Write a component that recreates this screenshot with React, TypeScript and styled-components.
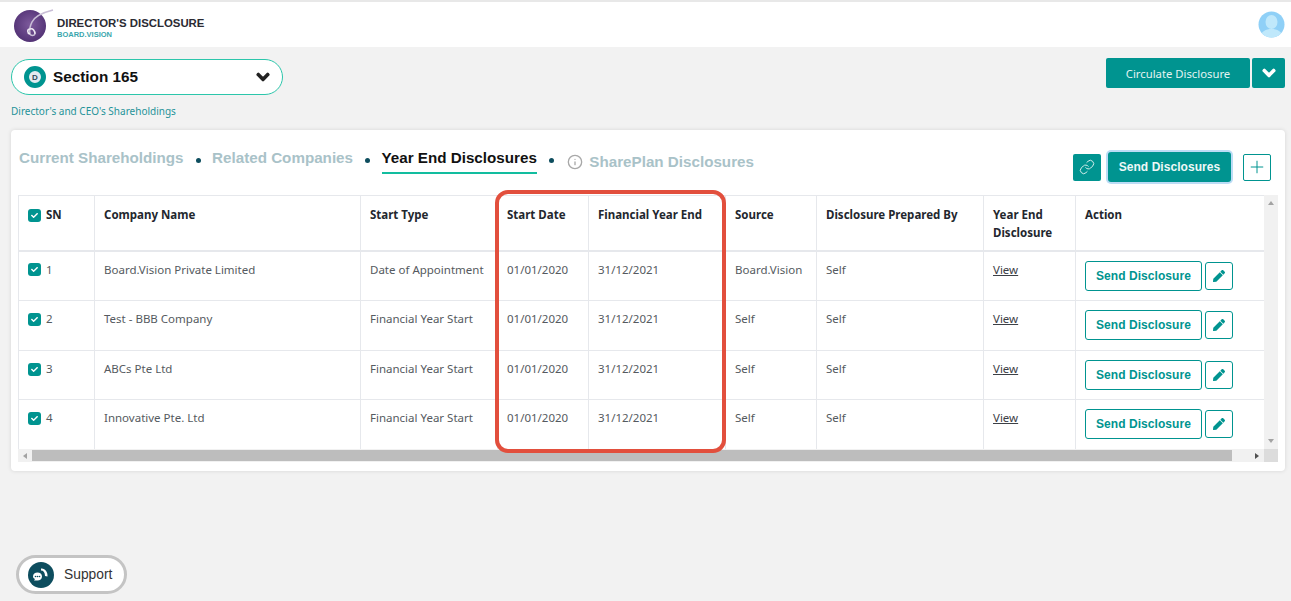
import React from 'react'
import styled, { createGlobalStyle } from 'styled-components'
import { FaChevronDown, FaPen, FaCheck } from 'react-icons/fa'
import { Link, Plus, Info } from 'lucide-react'

const teal = '#009490'
const uiFont = `'Noto Sans', 'Open Sans', sans-serif`
const arial = `'Liberation Sans', Arial, sans-serif`

const GlobalStyle = createGlobalStyle`
  html, body { margin: 0; padding: 0; height: 100%; background: #f2f2f2; overflow: hidden; }
  * { box-sizing: border-box; }
  body { font-family: ${uiFont}; }
`

const Page = styled.div`
  width: 1291px;
  height: 601px;
  display: flex;
  flex-direction: column;
  position: relative;
`

const TopBar = styled.header`
  height: 47px;
  flex: none;
  background: #fff;
  border-top: 2px solid #e8e8e8;
  display: flex;
  align-items: center;
  justify-content: space-between;
  padding: 0 6px 0 14px;
`

const Brand = styled.div`
  display: flex;
  align-items: center;
  gap: 3px;
`

const BrandText = styled.div`
  display: flex;
  flex-direction: column;
  font-family: ${arial};
  padding-top: 5px;
`

const BrandTitle = styled.span`
  font-size: 11.4px;
  line-height: 14px;
  font-weight: 700;
  color: #2b2b33;
`

const BrandSub = styled.span`
  font-size: 7.5px;
  line-height: 9px;
  font-weight: 700;
  color: #3aa6ad;
`

const Content = styled.main`
  flex: 1;
  padding: 12px 6px 0 11px;
  display: flex;
  flex-direction: column;
`

const SectionRow = styled.div`
  display: flex;
  align-items: flex-start;
  justify-content: space-between;
`

const SectionPill = styled.div`
  width: 272px;
  height: 36px;
  background: #fff;
  border: 1.5px solid #2cc6ab;
  border-radius: 18px;
  display: flex;
  align-items: center;
  padding: 0 12px 0 12px;
  gap: 7px;
`

const SectionBadge = styled.span`
  width: 22px;
  height: 22px;
  border-radius: 50%;
  border: 5px solid ${teal};
  background: #e4eaf0;
  display: flex;
  align-items: center;
  justify-content: center;
  font: 700 8px ${arial};
  color: #2c4a58;
`

const SectionTitle = styled.span`
  flex: 1;
  font: 700 15.3px ${arial};
  color: #111;
`

const SplitButton = styled.div`
  display: flex;
  gap: 2px;
  margin-top: -1px;
`

const CirculateBtn = styled.button<{ $wide?: boolean }>`
  height: 30px;
  width: ${p => (p.$wide ? '144px' : '33px')};
  border: none;
  border-radius: 2px;
  background: ${teal};
  color: #e3f3f2;
  font: 400 11.3px ${uiFont};
  display: flex;
  align-items: center;
  justify-content: center;
  padding: 0;
`

const SubLink = styled.div`
  margin-top: 9px;
  height: 14px;
  font-size: 10px;
  line-height: 14px;
  color: #1f9299;
`

const Card = styled.section`
  margin-top: 12px;
  height: 341px;
  background: #fff;
  border-radius: 4px;
  box-shadow: 0 0 4px rgba(0, 0, 0, 0.12);
  padding: 0 7px;
  display: flex;
  flex-direction: column;
`

const TabRow = styled.div`
  height: 65px;
  flex: none;
  display: flex;
  align-items: flex-start;
  padding-left: 1px;
`

const Tab = styled.div<{ $active?: boolean; $low?: boolean }>`
  font: 700 15.2px ${arial};
  color: ${p => (p.$active ? '#111' : '#a9c2c8')};
  padding-top: ${p => (p.$active ? '19px' : p.$low ? '23px' : '19px')};
  padding-left: ${p => (p.$low ? '2px' : '0')};
  display: flex;
  align-items: flex-start;
  gap: 6px;
`

const TabLabel = styled.span<{ $active?: boolean }>`
  display: inline-block;
  line-height: 18px;
  height: ${p => (p.$active ? '25px' : '18px')};
  border-bottom: ${p => (p.$active ? `2px solid #12bd9f` : 'none')};
`

const Dot = styled.span`
  width: 5px;
  height: 5px;
  border-radius: 50%;
  background: #0d4d5e;
  margin: 28px 11.5px 0 12px;
`

const TabActions = styled.div`
  margin-left: auto;
  padding: 22px 7px 0 0;
  display: flex;
  align-items: center;
`

const LinkBtn = styled.button`
  width: 28px;
  height: 27px;
  background: ${teal};
  border: none;
  border-radius: 2px;
  display: flex;
  align-items: center;
  justify-content: center;
  padding: 0;
  color: #d5eeec;
`

const SendAllBtn = styled.button`
  margin-left: 7px;
  width: 123px;
  height: 30px;
  background: ${teal};
  color: #eef8f7;
  border: none;
  border-radius: 3px;
  box-shadow: 0 0 0 2px #bcdcf5;
  font: 700 12px ${arial};
  letter-spacing: 0.06px;
  padding: 0;
`

const PlusBtn = styled.button`
  margin-left: 12px;
  width: 28px;
  height: 27px;
  background: #fff;
  border: 1px solid ${teal};
  border-radius: 2px;
  display: flex;
  align-items: center;
  justify-content: center;
  padding: 0;
  color: ${teal};
`

const TableFrame = styled.div`
  position: relative;
  width: 1259px;
  display: grid;
  grid-template-columns: 1fr 14px;
  grid-template-rows: 254px 13px;
`

const Table = styled.table`
  width: 1245px;
  border-collapse: collapse;
  table-layout: fixed;
  font-size: 11.5px;
  color: #555a60;
`

const Th = styled.th`
  height: 55px;
  padding: 10px 9px 0;
  vertical-align: top;
  text-align: left;
  font-weight: 700;
  font-size: 11.5px;
  line-height: 18px;
  color: #23272e;
  border: 1px solid #e6e8ec;
  border-bottom-width: 2px;
  &:last-child { border-right: none; }
`

const Td = styled.td<{ $h: number }>`
  height: ${p => p.$h}px;
  padding: 8px 9px 0;
  vertical-align: top;
  line-height: 20px;
  border: 1px solid #e6e8ec;
  border-top: none;
  &:last-child { border-right: none; }
  tr:last-child & { border-bottom: none; }
`

const SnCell = styled.div`
  display: flex;
  align-items: center;
  gap: 5px;
`

const Check = styled.span`
  width: 13px;
  height: 13px;
  border-radius: 3px;
  background: ${teal};
  color: #fff;
  display: inline-flex;
  align-items: center;
  justify-content: center;
`

const ViewLink = styled.a`
  color: #3c4046;
  text-decoration: underline;
`

const Actions = styled.div`
  display: flex;
  align-items: center;
  gap: 3px;
  margin-top: 1px;
`

const SendBtn = styled.button`
  width: 117px;
  height: 30px;
  background: #fff;
  border: 1px solid ${teal};
  border-radius: 3px;
  color: ${teal};
  font: 700 12px ${arial};
  letter-spacing: 0.06px;
  padding: 0;
`

const EditBtn = styled.button`
  width: 28px;
  height: 28px;
  background: #fff;
  border: 1px solid ${teal};
  border-radius: 3px;
  color: ${teal};
  display: flex;
  align-items: center;
  justify-content: center;
  padding: 0;
`

const VScroll = styled.div`
  background: #f1f1f1;
  display: flex;
  flex-direction: column;
  justify-content: space-between;
  align-items: center;
  padding: 6px 0;
`

const HScroll = styled.div`
  background: #f1f1f1;
  display: flex;
  align-items: center;
  justify-content: space-between;
  padding: 0 5px;
`

const HThumb = styled.div`
  position: absolute;
  left: 14px;
  bottom: 0;
  width: 1200px;
  height: 11px;
  margin-bottom: 1px;
  background: #bdbdbd;
`

const Corner = styled.div`
  background: #dcdcdc;
`

const Arrow = styled.span<{ $dir: 'up' | 'down' | 'left' | 'right' }>`
  width: 0;
  height: 0;
  border: 3px solid transparent;
  ${p => p.$dir === 'up' && 'border-bottom: 4px solid #a3a3a3; border-top: none;'}
  ${p => p.$dir === 'down' && 'border-top: 4px solid #a3a3a3; border-bottom: none;'}
  ${p => p.$dir === 'left' && 'border-right: 4px solid #a3a3a3; border-left: none;'}
  ${p => p.$dir === 'right' && 'border-left: 4px solid #505050; border-right: none;'}
`

const Highlight = styled.div`
  position: absolute;
  left: 477px;
  top: -5px;
  width: 231px;
  height: 263px;
  border: 4px solid #e24f3d;
  border-radius: 13px;
  pointer-events: none;
`

const Support = styled.div`
  position: absolute;
  left: 16px;
  bottom: 7px;
  width: 111px;
  height: 39px;
  background: #fff;
  border: 3px solid #c4c4c4;
  border-radius: 20px;
  display: flex;
  align-items: center;
  padding-left: 9px;
  gap: 10px;
  font: 400 13.8px ${arial};
  color: #333;
`

const SupportIcon = styled.span`
  width: 26px;
  height: 26px;
  border-radius: 50%;
  background: #0d4d5e;
  display: flex;
  align-items: center;
  justify-content: center;
`

const widths = [76, 266, 137, 91, 137, 91, 167, 92, 188]

const rows = [
  { sn: 1, name: 'Board.Vision Private Limited', type: 'Date of Appointment', source: 'Board.Vision', h: 50 },
  { sn: 2, name: 'Test - BBB Company', type: 'Financial Year Start', source: 'Self', h: 50 },
  { sn: 3, name: 'ABCs Pte Ltd', type: 'Financial Year Start', source: 'Self', h: 49 },
  { sn: 4, name: 'Innovative Pte. Ltd', type: 'Financial Year Start', source: 'Self', h: 50 },
]

const Logo = () => (
  <svg width="40" height="36" viewBox="0 0 40 36">
    <defs>
      <radialGradient id="lg" cx="50%" cy="45%" r="60%">
        <stop offset="0%" stopColor="#7d5a9c" />
        <stop offset="100%" stopColor="#4f2f72" />
      </radialGradient>
    </defs>
    <circle cx="16" cy="19" r="16" fill="url(#lg)" />
    <path d="M39 3C31 5 21 9 18 15c-2 4-3 8-2 12 1 2 4 2 5 0" fill="none" stroke="#c9bed6" strokeWidth="1.6" />
    <path d="M16 27c-3-1-3-5 0-5 3-1 5 2 5 5" fill="none" stroke="#efe9f3" strokeWidth="1.6" />
  </svg>
)

const Avatar = () => (
  <svg width="27" height="27" viewBox="0 0 27 27">
    <defs>
      <clipPath id="av"><circle cx="13.5" cy="13.5" r="13" /></clipPath>
    </defs>
    <circle cx="13.5" cy="13.5" r="13" fill="#8fd0f7" />
    <g clipPath="url(#av)" fill="#bfe8fb">
      <ellipse cx="13.5" cy="11" rx="6" ry="7" />
      <path d="M2 27c1-7 6-9 11.500-9S24 20 25 27z" />
    </g>
  </svg>
)

const ChatIcon = () => (
  <svg width="18" height="16" viewBox="0 0 18 16">
    <path d="M1 9.500C1 7 3 5.500 5.500 5.500S10 7 10 9.500 8 13.500 5.500 13.500H2l1-1.500C1.700 11.400 1 10.500 1 9.500z" fill="#fff" />
    <circle cx="3.500" cy="9.500" r=".8" fill="#0d4d5e" />
    <circle cx="5.500" cy="9.500" r=".8" fill="#0d4d5e" />
    <circle cx="7.500" cy="9.500" r=".8" fill="#0d4d5e" />
    <path d="M9 3.500c2.500 0 4 2 4 5.500l2.500.5C16 5 13 1 9 1.500z" fill="#fff" />
  </svg>
)

const CheckBox = () => (
  <Check><FaCheck size={7} /></Check>
)

const App: React.FC = () => {
  return (
    <Page>
      <GlobalStyle />
      <TopBar>
        <Brand>
          <Logo />
          <BrandText>
            <BrandTitle>DIRECTOR&apos;S DISCLOSURE</BrandTitle>
            <BrandSub>BOARD.VISION</BrandSub>
          </BrandText>
        </Brand>
        <Avatar />
      </TopBar>
      <Content>
        <SectionRow>
          <SectionPill>
            <SectionBadge>D</SectionBadge>
            <SectionTitle>Section 165</SectionTitle>
            <FaChevronDown size={14} color="#222" stroke="#222" strokeWidth={50} />
          </SectionPill>
          <SplitButton>
            <CirculateBtn $wide>Circulate Disclosure</CirculateBtn>
            <CirculateBtn><FaChevronDown size={14} color="#fff" stroke="#fff" strokeWidth={50} /></CirculateBtn>
          </SplitButton>
        </SectionRow>
        <SubLink>Director&apos;s and CEO&apos;s Shareholdings</SubLink>
        <Card>
          <TabRow>
            <Tab><TabLabel>Current Shareholdings</TabLabel></Tab>
            <Dot />
            <Tab><TabLabel>Related Companies</TabLabel></Tab>
            <Dot />
            <Tab $active><TabLabel $active>Year End Disclosures</TabLabel></Tab>
            <Dot />
            <Tab $low>
              <Info size={16} color="#a8a8a8" strokeWidth={2} style={{ marginTop: 1 }} />
              <TabLabel>SharePlan Disclosures</TabLabel>
            </Tab>
            <TabActions>
              <LinkBtn><Link size={16} strokeWidth={1.5} /></LinkBtn>
              <SendAllBtn>Send Disclosures</SendAllBtn>
              <PlusBtn><Plus size={20} strokeWidth={1.2} /></PlusBtn>
            </TabActions>
          </TabRow>
          <TableFrame>
            <Table>
              <colgroup>
                {widths.map((w, i) => <col key={i} style={{ width: w }} />)}
              </colgroup>
              <thead>
                <tr>
                  <Th><SnCell><CheckBox />SN</SnCell></Th>
                  <Th>Company Name</Th>
                  <Th>Start Type</Th>
                  <Th>Start Date</Th>
                  <Th>Financial Year End</Th>
                  <Th>Source</Th>
                  <Th>Disclosure Prepared By</Th>
                  <Th>Year End Disclosure</Th>
                  <Th>Action</Th>
                </tr>
              </thead>
              <tbody>
                {rows.map(r => (
                  <tr key={r.sn}>
                    <Td $h={r.h}><SnCell><CheckBox />{r.sn}</SnCell></Td>
                    <Td $h={r.h}>{r.name}</Td>
                    <Td $h={r.h}>{r.type}</Td>
                    <Td $h={r.h}>01/01/2020</Td>
                    <Td $h={r.h}>31/12/2021</Td>
                    <Td $h={r.h}>{r.source}</Td>
                    <Td $h={r.h}>Self</Td>
                    <Td $h={r.h}><ViewLink>View</ViewLink></Td>
                    <Td $h={r.h}>
                      <Actions>
                        <SendBtn>Send Disclosure</SendBtn>
                        <EditBtn><FaPen size={12} /></EditBtn>
                      </Actions>
                    </Td>
                  </tr>
                ))}
              </tbody>
            </Table>
            <VScroll>
              <Arrow $dir="up" />
              <Arrow $dir="down" />
            </VScroll>
            <HScroll>
              <Arrow $dir="left" />
              <Arrow $dir="right" />
            </HScroll>
            <Corner />
            <HThumb />
            <Highlight />
          </TableFrame>
        </Card>
      </Content>
      <Support>
        <SupportIcon><ChatIcon /></SupportIcon>
        Support
      </Support>
    </Page>
  )
}

export default App
